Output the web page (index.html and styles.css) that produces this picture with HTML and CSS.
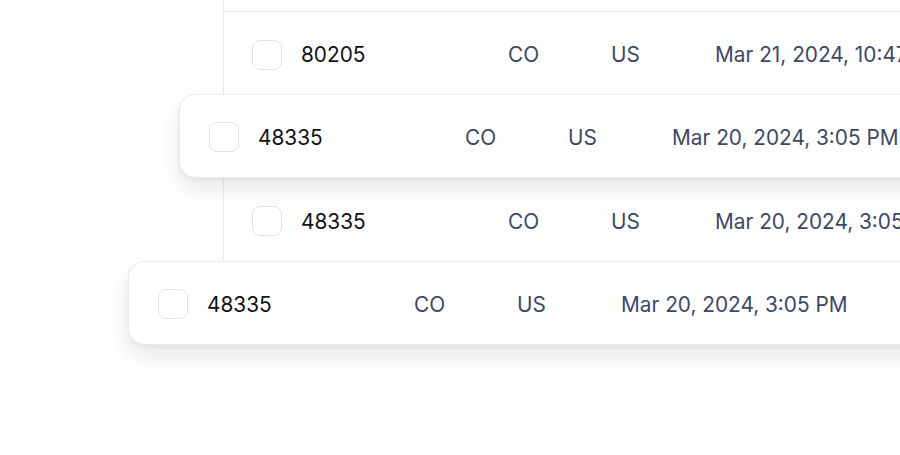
FILE: index.html
```html
<!DOCTYPE html>
<html>
<head>
<meta charset="utf-8">
<link rel="stylesheet" href="styles.css">
</head>
<body>
<div class="stage">
  <div class="table">
    <div class="row row-top"></div>
    <div class="row">
      <span class="cb"></span>
      <span class="cell zip">80205</span>
      <span class="cell st">CO</span>
      <span class="cell ct">US</span>
      <span class="cell dt">Mar 21, 2024, 10:47 AM</span>
    </div>
    <div class="row row-slot"></div>
    <div class="row">
      <span class="cb"></span>
      <span class="cell zip">48335</span>
      <span class="cell st">CO</span>
      <span class="cell ct">US</span>
      <span class="cell dt">Mar 20, 2024, 3:05 PM</span>
    </div>
  </div>

  <div class="card card-a">
    <span class="cb"></span>
    <span class="cell zip">48335</span>
    <span class="cell st">CO</span>
    <span class="cell ct">US</span>
    <span class="cell dt">Mar 20, 2024, 3:05 PM</span>
  </div>

  <div class="card card-b">
    <span class="cb"></span>
    <span class="cell zip">48335</span>
    <span class="cell st">CO</span>
    <span class="cell ct">US</span>
    <span class="cell dt">Mar 20, 2024, 3:05 PM</span>
  </div>
</div>
</body>
</html>
```

FILE: styles.css
```css
html, body {
  margin: 0;
  padding: 0;
  background: #ffffff;
  overflow: hidden;
}

.stage {
  position: relative;
  width: 900px;
  height: 455px;
  overflow: hidden;
  font-family: "Inter", "Liberation Sans", sans-serif;
  font-size: 20.8px;
}

.table {
  margin-left: 223px;
  width: 900px;
  border-left: 1px solid #ececee;
}

.row {
  display: flex;
  align-items: center;
  box-sizing: border-box;
  height: 83px;
  padding-top: 3px;
  padding-left: 28px;
  border-bottom: 1px solid #ececee;
  white-space: nowrap;
}

.row:last-child {
  border-bottom: none;
}

.row-top {
  height: 12px;
  padding-top: 0;
}

.cb {
  flex: none;
  width: 28px;
  height: 28px;
  border: 1px solid #e2e3e7;
  border-radius: 8px;
  background: #ffffff;
  box-sizing: content-box;
}

.cell {
  flex: none;
}

.zip {
  margin-left: 19px;
  width: 207px;
  color: #131313;
}

.st {
  width: 103px;
  color: #3d4964;
}

.ct {
  width: 104px;
  color: #3d4964;
}

.dt {
  color: #3d4964;
}

.card {
  position: absolute;
  display: flex;
  align-items: center;
  box-sizing: border-box;
  width: 900px;
  padding-top: 2px;
  padding-left: 29px;
  background: #ffffff;
  border: 1px solid #e9eaed;
  border-radius: 16px;
  box-shadow: 0 11px 24px rgba(0, 0, 0, 0.1), 0 2px 5px rgba(0, 0, 0, 0.04);
  white-space: nowrap;
}

.card-a {
  left: 179px;
  top: 94px;
  height: 84px;
}

.card-b {
  left: 128px;
  top: 261px;
  height: 84px;
}
```
